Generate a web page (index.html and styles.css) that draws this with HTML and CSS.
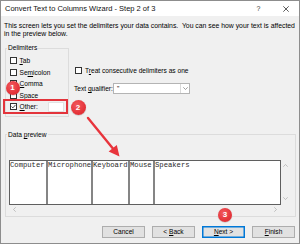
FILE: index.html
```html
<!DOCTYPE html>
<html>
<head>
<meta charset="utf-8">
<title>Convert Text to Columns Wizard</title>
<link rel="stylesheet" href="styles.css">
</head>
<body>
<div class="window">
  <div class="titlebar">
    <span class="title">Convert Text to Columns Wizard - Step 2 of 3</span>
    <div class="tb-controls">
      <span class="tb-btn">?</span>
      <span class="tb-btn"><svg width="6" height="6" viewBox="0 0 6 6"><path d="M0.3 0.3L5.7 5.7M5.7 0.3L0.3 5.7" stroke="#333" stroke-width="0.8" fill="none"/></svg></span>
    </div>
  </div>
  <div class="main">
    <p class="desc">This screen lets you set the delimiters your data contains.&nbsp; You can see how your text is affected<br>in the preview below.</p>
    <div class="options">
      <fieldset class="group delims">
        <legend>Delimiters</legend>
        <div class="group-body">
          <div class="check-row"><span class="cb"></span><span><u>T</u>ab</span></div>
          <div class="check-row"><span class="cb"></span><span>Se<u>m</u>icolon</span></div>
          <div class="check-row"><span class="cb"></span><span><u>C</u>omma</span></div>
          <div class="check-row"><span class="cb"></span><span><u>S</u>pace</span></div>
          <div class="check-row"><span class="cb"><svg width="5" height="5" viewBox="0 0 5 5"><path d="M0.5 2.5L1.9 3.9L4.5 0.9" stroke="#222" stroke-width="0.8" fill="none"/></svg></span><span><u>O</u>ther:</span><span class="other-input"></span></div>
        </div>
      </fieldset>
      <div class="side">
        <div class="check-row"><span class="cb"></span><span>T<u>r</u>eat consecutive delimiters as one</span></div>
        <div class="qual-row">
          <span class="qual-label">Text <u>q</u>ualifier:</span>
          <div class="select">
            <span class="select-val">"</span>
            <span class="select-btn"><svg width="5" height="3" viewBox="0 0 5 3"><path d="M0.3 0.3L2.5 2.5L4.7 0.3" stroke="#777" stroke-width="0.7" fill="none"/></svg></span>
          </div>
        </div>
      </div>
    </div>
    <fieldset class="group preview">
      <legend>Data <u>p</u>review</legend>
      <div class="preview-wrap">
        <div class="preview-top">
          <div class="preview-box">
            <div class="col c1">Computer</div>
            <div class="col c2">Microphone</div>
            <div class="col c3">Keyboard</div>
            <div class="col c4">Mouse</div>
            <div class="col c5">Speakers</div>
          </div>
          <div class="vscroll">
            <svg width="5" height="3" viewBox="0 0 5 3"><path d="M0.3 2.7L2.5 0.5L4.7 2.7" stroke="#aaaaaa" stroke-width="0.7" fill="none"/></svg>
            <svg width="5" height="3" viewBox="0 0 5 3"><path d="M0.3 0.3L2.5 2.5L4.7 0.3" stroke="#aaaaaa" stroke-width="0.7" fill="none"/></svg>
          </div>
        </div>
        <div class="hscroll">
          <svg width="3" height="5" viewBox="0 0 3 5"><path d="M2.7 0.3L0.5 2.5L2.7 4.7" stroke="#aaaaaa" stroke-width="0.7" fill="none"/></svg>
          <svg width="3" height="5" viewBox="0 0 3 5"><path d="M0.3 0.3L2.5 2.5L0.3 4.7" stroke="#aaaaaa" stroke-width="0.7" fill="none"/></svg>
        </div>
      </div>
    </fieldset>
    <div class="buttons">
      <button class="btn">Cancel</button>
      <button class="btn">&lt; <u>B</u>ack</button>
      <button class="btn primary"><u>N</u>ext &gt;</button>
      <button class="btn"><u>F</u>inish</button>
    </div>
  </div>

  <div class="highlight"></div>
  <div class="badge b1">1</div>
  <div class="badge b2">2</div>
  <div class="badge b3">3</div>
  <svg class="arrow" width="300" height="244" viewBox="0 0 300 244">
    <line x1="88" y1="118" x2="113.5" y2="149.2" stroke="#e8343c" stroke-width="2.4" stroke-linecap="round"/>
    <polygon points="119.5,156.5 108.6,151.6 116.8,144.9" fill="#e8343c"/>
  </svg>
</div>
</body>
</html>
```

FILE: styles.css
```css
* {
  box-sizing: border-box;
}

html,
body {
  margin: 0;
  padding: 0;
}

body {
  width: 300px;
  height: 244px;
  overflow: hidden;
  background: #ffffff;
}

.window {
  position: relative;
  width: 300px;
  height: 244px;
  border: 1px solid #8d8d8d;
  background: #f0f0f0;
  display: flex;
  flex-direction: column;
  font-family: "Liberation Sans", Arial, sans-serif;
  font-size: 6.6px;
  color: #000000;
  overflow: hidden;
}

/* Title bar */
.titlebar {
  flex: none;
  height: 15px;
  background: #ffffff;
  display: flex;
  align-items: center;
  padding-left: 4px;
}

.title {
  font-size: 7.5px;
  color: #111111;
}

.tb-controls {
  margin-left: auto;
  display: flex;
  height: 100%;
}

.tb-btn {
  width: 27px;
  display: flex;
  align-items: center;
  justify-content: center;
  font-size: 7px;
  color: #333333;
}

/* Main area */
.main {
  flex: 1;
  display: flex;
  flex-direction: column;
  padding: 0 4px;
}

.desc {
  margin: 6px 0 0 -1px;
  line-height: 8px;
  font-size: 6.85px;
  white-space: nowrap;
}

.options {
  flex: none;
  display: flex;
  margin-top: 6px;
}

.group {
  margin: 0;
  padding: 0;
  border: 1px solid #dcdcdc;
  min-inline-size: 0;
}

.group legend {
  padding: 0 1px;
  margin-left: 1px;
  line-height: 8px;
}

.delims {
  flex: none;
  width: 64px;
}

.delims .group-body {
  padding: 3.3px 0 3.7px 0;
}

.check-row {
  display: flex;
  align-items: center;
  height: 11.4px;
  white-space: nowrap;
}

.cb {
  flex: none;
  width: 7px;
  height: 7px;
  border: 1px solid #333333;
  background: #ffffff;
  margin-left: 3.5px;
  margin-right: 3px;
  display: flex;
  align-items: center;
  justify-content: center;
}

.other-input {
  width: 16px;
  height: 10px;
  margin-left: auto;
  margin-right: 4px;
  background: #ffffff;
  border: 1px solid #e2e2e2;
}

.side {
  padding-top: 21.3px;
}

.side .cb {
  margin-left: 6px;
}

.qual-row {
  display: flex;
  align-items: center;
  margin-top: 6.3px;
  height: 11px;
}

.qual-label {
  width: 39px;
  margin-left: 5px;
  white-space: nowrap;
}

.select {
  width: 77px;
  height: 11px;
  background: #ffffff;
  border: 1px solid #b4b4b4;
  display: flex;
}

.select-val {
  flex: 1;
  padding-left: 3px;
  line-height: 9px;
}

.select-btn {
  width: 9px;
  border-left: 1px solid #dadada;
  display: flex;
  align-items: center;
  justify-content: center;
}

/* Data preview */
.preview {
  flex: none;
  margin-top: 14px;
  width: 291px;
}

.preview-wrap {
  display: flex;
  flex-direction: column;
  margin: 21px 0 1px 3px;
}

.preview-top {
  display: flex;
  height: 45px;
}

.preview-box {
  flex: none;
  width: 272px;
  height: 45px;
  border: 1px solid #5f5f5f;
  background: #ffffff;
  display: flex;
  overflow: hidden;
}

.col {
  flex: none;
  height: 100%;
  border-right: 2px solid #858585;
  font-family: "Liberation Mono", "Courier New", monospace;
  font-size: 7.2px;
  line-height: 9px;
  color: #2a2a2a;
  white-space: nowrap;
  overflow: hidden;
}

.c1 {
  width: 38px;
}

.c2 {
  width: 45px;
}

.c3 {
  width: 37px;
}

.c4 {
  width: 25px;
}

.c5 {
  flex: 1;
  border-right: none;
}

.vscroll {
  flex: none;
  width: 10px;
  display: flex;
  flex-direction: column;
  justify-content: space-between;
  align-items: center;
  padding: 4.5px 1px 4.5px 0;
}

.vscroll svg,
.hscroll svg {
  display: block;
}

.hscroll {
  width: 272px;
  height: 10px;
  display: flex;
  justify-content: space-between;
  align-items: center;
  padding: 0 4.5px 0 3.5px;
}

/* Buttons */
.buttons {
  flex: none;
  display: flex;
  justify-content: flex-end;
  gap: 7px;
  margin-top: 9px;
}

.btn {
  width: 43px;
  height: 12px;
  padding: 0;
  margin: 0;
  background: #e1e1e1;
  border: 1px solid #adadad;
  font-family: inherit;
  font-size: 6.6px;
  color: #000000;
  line-height: 10px;
}

.btn.primary {
  border-color: #0078d7;
  box-shadow: inset 0 0 0 0.5px #0078d7;
}

/* Annotations over the dialog */
.highlight {
  position: absolute;
  left: 2px;
  top: 98px;
  width: 65px;
  height: 15px;
  border: 2px solid #e3343b;
}

.badge {
  position: absolute;
  width: 14px;
  height: 14px;
  border-radius: 50%;
  background: radial-gradient(circle at 40% 35%, #f25a5f 0%, #e5343a 60%, #d32a30 100%);
  color: #ffffff;
  font-family: "Liberation Sans", Arial, sans-serif;
  font-weight: bold;
  font-size: 8px;
  line-height: 14px;
  text-align: center;
  box-shadow: 0 0.5px 1px rgba(0, 0, 0, 0.25);
}

.b1 {
  left: 4.5px;
  top: 80px;
}

.b2 {
  left: 69.5px;
  top: 98.5px;
  width: 15px;
  height: 15px;
  line-height: 15px;
}

.b3 {
  left: 217px;
  top: 207px;
}

.arrow {
  position: absolute;
  left: -1px;
  top: -1px;
  pointer-events: none;
}
```
